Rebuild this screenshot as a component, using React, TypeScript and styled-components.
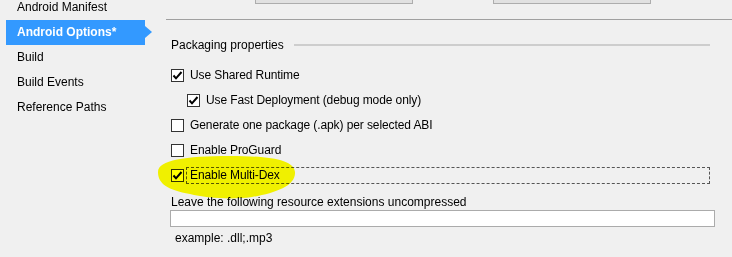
import React from 'react';
import styled, { createGlobalStyle } from 'styled-components';

const GlobalStyle = createGlobalStyle`
  body {
    margin: 0;
    background: #f0f0f0;
    font-family: "Liberation Sans", Arial, sans-serif;
    font-size: 12px;
    color: #000;
  }
`;

const navItems = [
  'Android Manifest',
  'Android Options*',
  'Build',
  'Build Events',
  'Reference Paths',
];

interface CheckOption {
  label: string;
  checked: boolean;
  indent?: boolean;
  focused?: boolean;
}

const options: CheckOption[] = [
  { label: 'Use Shared Runtime', checked: true },
  { label: 'Use Fast Deployment (debug mode only)', checked: true, indent: true },
  { label: 'Generate one package (.apk) per selected ABI', checked: false },
  { label: 'Enable ProGuard', checked: false },
  { label: 'Enable Multi-Dex', checked: true, focused: true },
];

const CheckBox = ({ checked }: { checked: boolean }) => (
  <Box>
    {checked && (
      <svg width="11" height="11" viewBox="0 0 11 11">
        <path
          d="M1.5 5.5 L4 8.3 L9.5 2"
          fill="none"
          stroke="#000"
          strokeWidth="2"
        />
      </svg>
    )}
  </Box>
);

const App = () => {
  return (
    <Page>
      <GlobalStyle />
      <Sidebar>
        {navItems.map((name, i) => (
          <NavItem key={name} $active={i === 1}>
            {name}
          </NavItem>
        ))}
      </Sidebar>
      <Main>
        <TopButtons>
          <TabButton />
          <TabButton />
        </TopButtons>
        <Separator />
        <Content>
          <GroupHeader>
            <span>Packaging properties</span>
            <GroupLine />
          </GroupHeader>
          <Options>
            {options.map((opt) => (
              <OptionRow key={opt.label} $indent={opt.indent}>
                <CheckBox checked={opt.checked} />
                <OptionLabel $focused={opt.focused}>{opt.label}</OptionLabel>
              </OptionRow>
            ))}
          </Options>
          <FieldLabel>Leave the following resource extensions uncompressed</FieldLabel>
          <TextInput />
          <Hint>example: .dll;.mp3</Hint>
        </Content>
      </Main>
      <Highlight width="142" height="46" viewBox="156 154 142 46">
        <path
          d="M158 172 C158 160 185 156 230 156 C270 156 294 160 295 172 C296 186 275 193 252 197 C232 200 205 198 190 194 C168 190 158 184 158 172 Z"
          fill="#ffff00"
        />
      </Highlight>
    </Page>
  );
};

const Page = styled.div`
  position: relative;
  display: flex;
  width: 732px;
  height: 257px;
  overflow: hidden;
`;

const Sidebar = styled.nav`
  width: 166px;
  flex-shrink: 0;
  margin-top: -5px;
  display: flex;
  flex-direction: column;
`;

const NavItem = styled.div<{ $active?: boolean }>`
  position: relative;
  height: 25px;
  line-height: 25px;
  width: 139px;
  margin-left: 6px;
  padding-left: 11px;
  box-sizing: border-box;
  white-space: nowrap;
  background: ${(p) => (p.$active ? '#3399ff' : 'transparent')};
  color: ${(p) => (p.$active ? '#fff' : '#000')};
  font-weight: ${(p) => (p.$active ? 'bold' : 'normal')};

  &::after {
    content: '';
    display: ${(p) => (p.$active ? 'block' : 'none')};
    position: absolute;
    right: -7px;
    top: 6px;
    border-left: 7px solid #3399ff;
    border-top: 6px solid transparent;
    border-bottom: 6px solid transparent;
  }
`;

const Main = styled.main`
  flex: 1;
  display: flex;
  flex-direction: column;
`;

const TopButtons = styled.div`
  display: flex;
  gap: 80px;
  padding-left: 89px;
  height: 4px;
`;

const TabButton = styled.div`
  width: 158px;
  height: 4px;
  box-sizing: border-box;
  background: #e1e1e1;
  border: 1px solid #adadad;
  border-top: none;
`;

const Separator = styled.div`
  margin-top: 15px;
  height: 1px;
  background: #a0a0a0;
`;

const Content = styled.div`
  padding-left: 5px;
  display: flex;
  flex-direction: column;
`;

const GroupHeader = styled.div`
  margin-top: 15px;
  height: 20px;
  display: flex;
  align-items: center;
  margin-right: 22px;
`;

const GroupLine = styled.div`
  flex: 1;
  height: 2px;
  background: #cdcdcd;
  margin-left: 10px;
`;

const Options = styled.div`
  margin-top: 8px;
  display: flex;
  flex-direction: column;
`;

const OptionRow = styled.div<{ $indent?: boolean }>`
  height: 25px;
  display: flex;
  align-items: center;
  padding-left: ${(p) => (p.$indent ? '16px' : '0')};
  margin-right: 22px;
`;

const Box = styled.div`
  width: 13px;
  height: 13px;
  box-sizing: border-box;
  border: 1px solid #333;
  background: #fff;
  display: flex;
  align-items: center;
  justify-content: center;
  flex-shrink: 0;
`;

const OptionLabel = styled.span<{ $focused?: boolean }>`
  margin-left: ${(p) => (p.$focused ? '2px' : '6px')};
  padding: ${(p) => (p.$focused ? '0 0 0 3px' : '0')};
  height: ${(p) => (p.$focused ? '15px' : 'auto')};
  line-height: 15px;
  flex: ${(p) => (p.$focused ? 1 : 'none')};
  border: ${(p) => (p.$focused ? '1px dashed #555' : 'none')};
  white-space: nowrap;
  letter-spacing: -0.1px;
`;

const FieldLabel = styled.div`
  margin-top: 6px;
  height: 16px;
  line-height: 16px;
`;

const TextInput = styled.div`
  margin-left: -1px;
  margin-right: 17px;
  height: 17px;
  box-sizing: border-box;
  border: 1px solid #ababab;
  background: #fff;
`;

const Hint = styled.div`
  margin-top: 3px;
  padding-left: 4px;
  height: 16px;
  line-height: 16px;
`;

const Highlight = styled.svg`
  position: absolute;
  left: 156px;
  top: 154px;
  mix-blend-mode: multiply;
  pointer-events: none;
`;

export default App;
